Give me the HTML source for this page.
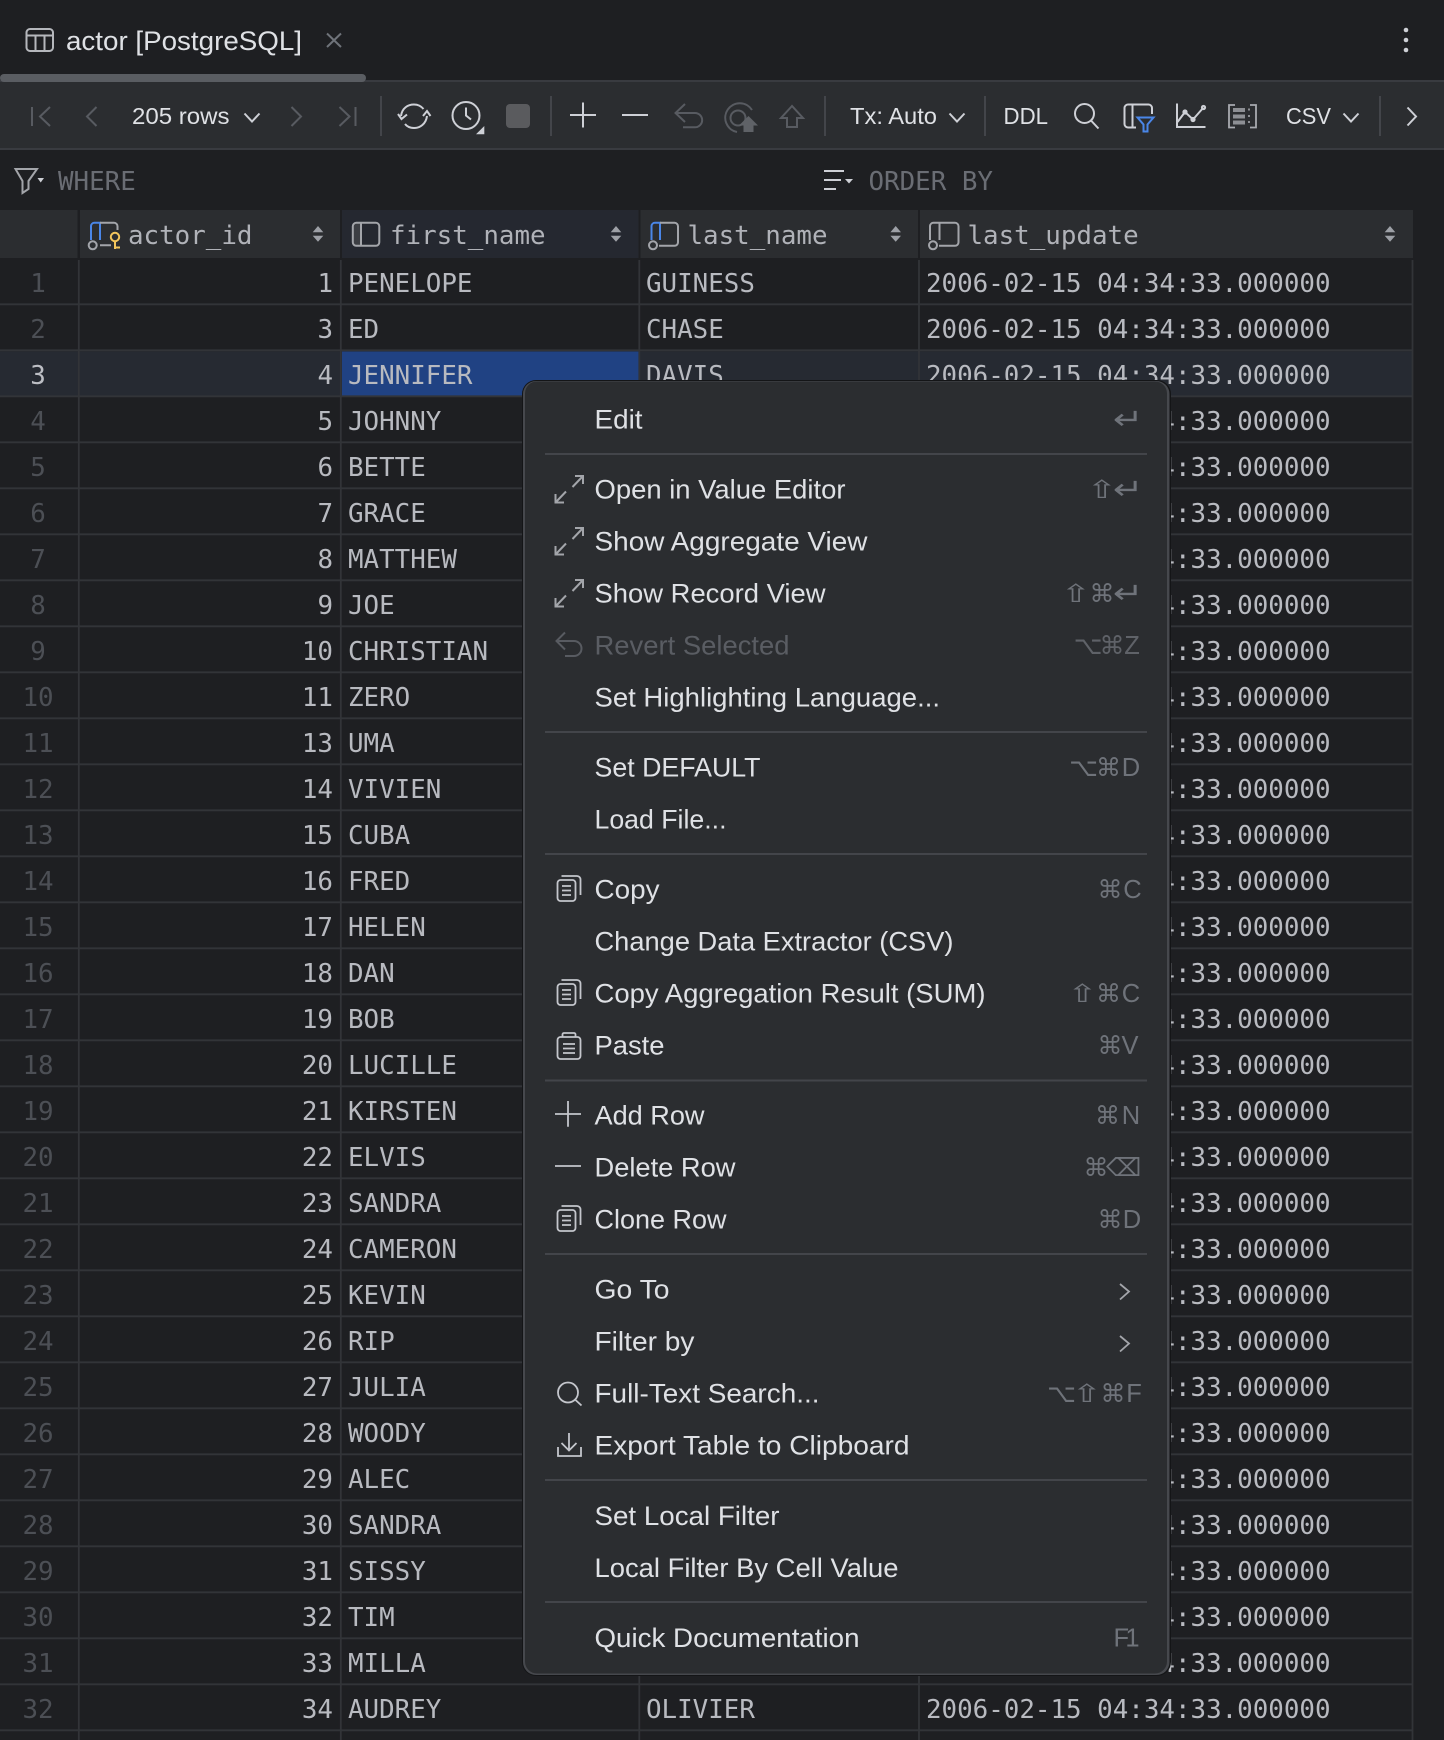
<!DOCTYPE html>
<html lang="en"><head><meta charset="utf-8"><title>actor [PostgreSQL]</title>
<style>
html,body{margin:0;padding:0;background:#1e1f22;width:1444px;height:1740px;overflow:hidden}
svg{display:block}
text{white-space:pre}
.u{font-family:"Liberation Sans",sans-serif;font-size:26.5px;fill:#dfe1e5}
.t{font-family:"Liberation Sans",sans-serif;font-size:23.5px;fill:#dfe1e5}
.d{fill:#5a5d63}
.mono{font-family:"DejaVu Sans Mono","Liberation Mono",monospace;font-size:25.85px}
.c{fill:#b8bac0}
.n{fill:#4c4f55;text-anchor:middle}
.r{fill:#b8bac0;text-anchor:end}
.h{fill:#b0b2b8}
.w{fill:#6a6d74}
.s{font-family:"DejaVu Sans",sans-serif;font-size:25px;fill:#6f737a;text-anchor:middle}
.l{font-family:"Liberation Sans",sans-serif;font-size:25.5px;fill:#6f737a;text-anchor:middle}
.dim .s,.dim .l{fill:#5f6268}
.ic{fill:none;stroke:#ced0d6;stroke-width:2}
.id{fill:none;stroke:#585b61;stroke-width:2}
.im{fill:none;stroke:#a3a5aa;stroke-width:2}
</style></head><body>
<svg xmlns="http://www.w3.org/2000/svg" width="1444" height="1740" viewBox="0 0 1444 1740">
<rect width="1444" height="1740" fill="#1e1f22"/>

<!-- tab bar -->
<rect x="0" y="80" width="1444" height="2" fill="#393b40"/>
<rect x="0" y="74" width="366" height="8" rx="4" fill="#5a5d62"/>
<g fill="none" stroke="#b5b7bc" stroke-width="2"><rect x="26.5" y="29" width="26.5" height="22" rx="3.5"/><path d="M27 35.5H53M35.5 35.5V51M44.5 35.5V51"/></g>
<text x="66" y="50" class="u" textLength="236" lengthAdjust="spacingAndGlyphs">actor [PostgreSQL]</text>
<path d="M327 33.5L341 47M341 33.5L327 47" fill="none" stroke="#6f737a" stroke-width="2"/>
<g fill="#ced0d6"><circle cx="1406" cy="30" r="2.3"/><circle cx="1406" cy="40" r="2.3"/><circle cx="1406" cy="50" r="2.3"/></g>

<!-- toolbar -->
<rect x="0" y="82" width="1444" height="66" fill="#2b2d30"/>
<rect x="0" y="148" width="1444" height="2" fill="#393b40"/>
<g class="id">
<path d="M32 107V126M50 107L40 116.5L50 126"/>
<path d="M96.5 107L87 116.5L96.5 126"/>
<path d="M291.5 107L301 116.5L291.5 126"/>
<path d="M339.5 107L349.5 116.5L339.5 126M355.5 107V126"/>
</g>
<text x="132" y="124" class="t" textLength="97.5" lengthAdjust="spacingAndGlyphs">205 rows</text>
<path d="M244.5 113.5L252 121.5L259.5 113.5" class="ic"/>
<g fill="#43454a"><rect x="380" y="96" width="2" height="40"/><rect x="550" y="96" width="2" height="40"/><rect x="824" y="96" width="2" height="40"/><rect x="984" y="96" width="2" height="40"/><rect x="1379" y="96" width="2" height="40"/></g>
<g class="ic">
<path d="M401 116C402 108 408 104.5 414 104.5C418 104.5 421 106 423.5 109"/>
<path d="M398 114L401.5 119L407 114.5"/>
<path d="M427 116C426 124 420 128 414 128C410 128 407 126.5 405 124"/>
<path d="M423 116L427 111L430.5 116"/>
<circle cx="466" cy="115.5" r="13.5"/>
<path d="M466 107.5V115.5L471 119.5"/>
<path d="M570 115H596M583 102.5V127.5"/>
<path d="M622 115H648"/>
</g>
<path d="M476 134.3H484.3V126Z" fill="#ced0d6"/>
<rect x="506" y="104" width="24" height="24" rx="4" fill="#5a5b5e"/>
<path d="M685 104L675.5 113L685 122M676 113H695A7 7 0 0 1 695 127.3H683" class="id"/>
<g class="id"><path d="M737 132A14.5 14.5 0 1 1 752 110"/><circle cx="738" cy="118" r="7.5"/><path d="M792 106L781 118H787V127H797V118H803Z"/></g>
<path d="M748.5 116L758 125.5H753.5V132H743.5V125.5H739Z" fill="#5f6267"/>
<text x="850" y="124" class="t" textLength="87" lengthAdjust="spacingAndGlyphs">Tx: Auto</text>
<path d="M949.5 113.5L957 121.5L964.5 113.5" class="ic"/>
<text x="1003.5" y="124" class="t" textLength="44.5" lengthAdjust="spacingAndGlyphs">DDL</text>
<g class="ic">
<circle cx="1084.5" cy="113.5" r="9.5"/><path d="M1091 120.5L1098.5 128.5"/>
<path d="M1136 127.5H1128A3.5 3.5 0 0 1 1124.5 124V108A3.5 3.5 0 0 1 1128 104.5H1148.5A3.5 3.5 0 0 1 1152 108V114M1132.5 104.5V127.5"/>
<path d="M1177 103.5V127H1205.5"/>
<path d="M1177.5 122L1185 112L1193 119.5L1203.5 107.5"/>
<circle cx="1185" cy="112" r="1.6"/><circle cx="1193" cy="119.5" r="1.6"/><circle cx="1203.5" cy="107.5" r="1.6"/>
</g>
<path d="M1137.5 117.5H1153.5L1147.5 124.5V131.5H1143.5V124.5Z" fill="none" stroke="#4a86e8" stroke-width="2"/>
<g fill="none" stroke="#a8aab0" stroke-width="1.8"><path d="M1235 105H1229V127.5H1235M1250 105H1256V127.5H1250"/></g>
<g fill="#8d8f94"><rect x="1233" y="108" width="12" height="4"/><rect x="1233" y="114.5" width="12" height="4"/><rect x="1233" y="120.5" width="12" height="4"/><rect x="1248" y="108.5" width="2" height="2"/><rect x="1248" y="115" width="2" height="2"/><rect x="1248" y="121" width="2" height="2"/></g>
<text x="1286" y="124" class="t" textLength="45" lengthAdjust="spacingAndGlyphs">CSV</text>
<path d="M1343.5 113.5L1351 121.5L1358.5 113.5" class="ic"/>
<path d="M1407.5 107.5L1416 116.5L1407.5 125.5" class="ic"/>

<!-- filter row -->
<path d="M15.5 169H37L28.5 181V189L22.5 193V181Z" class="im"/>
<path d="M37.5 178H44L40.7 182.5Z" fill="#ced0d6"/>
<text x="58" y="190" class="mono w">WHERE</text>
<path d="M824 171H844M824 180H841M824 189H836" class="ic"/>
<path d="M845 179H853L849 183.5Z" fill="#ced0d6"/>
<text x="868.5" y="190" class="mono w">ORDER BY</text>

<!-- header -->
<rect x="0" y="210" width="77.5" height="48" fill="#2b2d30"/>
<rect x="80" y="210" width="260" height="48" fill="#2b2d30"/>
<rect x="342" y="210" width="296.5" height="48" fill="#252830"/>
<rect x="640.5" y="210" width="277.5" height="48" fill="#2b2d30"/>
<rect x="920" y="210" width="493" height="48" fill="#2b2d30"/>

<!-- row 3 highlight -->
<rect x="0" y="351.5" width="1413" height="44" fill="#262a32"/>
<rect x="342" y="351.5" width="297" height="44" fill="#204283"/>

<!-- grid -->
<path stroke="#323438" stroke-width="1.8" fill="none" d="M0 304.3H1413M0 350.3H1413M0 396.3H1413M0 442.3H1413M0 488.3H1413M0 534.3H1413M0 580.3H1413M0 626.3H1413M0 672.3H1413M0 718.3H1413M0 764.3H1413M0 810.3H1413M0 856.3H1413M0 902.3H1413M0 948.3H1413M0 994.3H1413M0 1040.3H1413M0 1086.3H1413M0 1132.3H1413M0 1178.3H1413M0 1224.3H1413M0 1270.3H1413M0 1316.3H1413M0 1362.3H1413M0 1408.3H1413M0 1454.3H1413M0 1500.3H1413M0 1546.3H1413M0 1592.3H1413M0 1638.3H1413M0 1684.3H1413M0 1730.3H1413M78.8 260V1740M340.8 260V1740M639.3 260V1740M919 260V1740M1412.5 260V1740"/>

<!-- header icons -->
<path d="M91 240V226A3.5 3.5 0 0 1 94.5 222.8H100V240" fill="none" stroke="#4a86e8" stroke-width="2"/>
<path d="M100 222.8H114A3.5 3.5 0 0 1 117.5 226.3V230M100 245.3H111" class="im"/>
<circle cx="92.7" cy="245.3" r="4" class="im"/>
<g fill="none" stroke="#f2c55c" stroke-width="2"><circle cx="115" cy="237" r="4.2"/><path d="M115 241.5V249M115 247.5H120"/></g>
<text x="128" y="244" class="mono h">actor_id</text>
<path d="M318 226L323.3 232.3H312.7ZM318 241.7L323.3 235.7H312.7Z" fill="#9da0a6"/>

<rect x="353" y="223" width="8" height="22.5" fill="#3c3e43"/>
<rect x="352.8" y="222.8" width="26.5" height="23" rx="3.5" class="im"/><path d="M361 222.8V245.8" class="im"/>
<text x="390" y="244" class="mono h">first_name</text>
<path d="M616 226L621.3 232.3H610.7ZM616 241.7L621.3 235.7H610.7Z" fill="#9da0a6"/>

<path d="M651.5 240V226A3.5 3.5 0 0 1 655 222.8H660V240" fill="none" stroke="#4a86e8" stroke-width="2"/>
<path d="M660 222.8H674.5A3.5 3.5 0 0 1 678 226.3V242.3A3.5 3.5 0 0 1 674.5 245.8H659" class="im"/>
<circle cx="653" cy="245.3" r="4" class="im"/>
<text x="687.5" y="244" class="mono h">last_name</text>
<path d="M895.7 226L901 232.3H890.4ZM895.7 241.7L901 235.7H890.4Z" fill="#9da0a6"/>

<path d="M930 240V226A3.5 3.5 0 0 1 933.5 222.8H955A3.5 3.5 0 0 1 958.5 226.3V242.3A3.5 3.5 0 0 1 955 245.8H939M939.5 222.8V240" class="im"/>
<circle cx="933" cy="245.3" r="4" class="im"/>
<text x="967.5" y="244" class="mono h">last_update</text>
<path d="M1390 226L1395.3 232.3H1384.7ZM1390 241.7L1395.3 235.7H1384.7Z" fill="#9da0a6"/>

<!-- rows -->
<g class="mono">
<text x="38" y="291.8" class="n">1</text><text x="333" y="291.8" class="r">1</text><text x="348" y="291.8" class="c">PENELOPE</text><text x="646" y="291.8" class="c">GUINESS</text><text x="926" y="291.8" class="c">2006-02-15 04:34:33.000000</text>
<text x="38" y="337.8" class="n">2</text><text x="333" y="337.8" class="r">3</text><text x="348" y="337.8" class="c">ED</text><text x="646" y="337.8" class="c">CHASE</text><text x="926" y="337.8" class="c">2006-02-15 04:34:33.000000</text>
<text x="38" y="383.8" class="n" style="fill:#bcbec4">3</text><text x="333" y="383.8" class="r">4</text><text x="348" y="383.8" class="c">JENNIFER</text><text x="646" y="383.8" class="c">DAVIS</text><text x="926" y="383.8" class="c">2006-02-15 04:34:33.000000</text>
<text x="38" y="429.8" class="n">4</text><text x="333" y="429.8" class="r">5</text><text x="348" y="429.8" class="c">JOHNNY</text><text x="926" y="429.8" class="c">2006-02-15 04:34:33.000000</text>
<text x="38" y="475.8" class="n">5</text><text x="333" y="475.8" class="r">6</text><text x="348" y="475.8" class="c">BETTE</text><text x="926" y="475.8" class="c">2006-02-15 04:34:33.000000</text>
<text x="38" y="521.8" class="n">6</text><text x="333" y="521.8" class="r">7</text><text x="348" y="521.8" class="c">GRACE</text><text x="926" y="521.8" class="c">2006-02-15 04:34:33.000000</text>
<text x="38" y="567.8" class="n">7</text><text x="333" y="567.8" class="r">8</text><text x="348" y="567.8" class="c">MATTHEW</text><text x="926" y="567.8" class="c">2006-02-15 04:34:33.000000</text>
<text x="38" y="613.8" class="n">8</text><text x="333" y="613.8" class="r">9</text><text x="348" y="613.8" class="c">JOE</text><text x="926" y="613.8" class="c">2006-02-15 04:34:33.000000</text>
<text x="38" y="659.8" class="n">9</text><text x="333" y="659.8" class="r">10</text><text x="348" y="659.8" class="c">CHRISTIAN</text><text x="926" y="659.8" class="c">2006-02-15 04:34:33.000000</text>
<text x="38" y="705.8" class="n">10</text><text x="333" y="705.8" class="r">11</text><text x="348" y="705.8" class="c">ZERO</text><text x="926" y="705.8" class="c">2006-02-15 04:34:33.000000</text>
<text x="38" y="751.8" class="n">11</text><text x="333" y="751.8" class="r">13</text><text x="348" y="751.8" class="c">UMA</text><text x="926" y="751.8" class="c">2006-02-15 04:34:33.000000</text>
<text x="38" y="797.8" class="n">12</text><text x="333" y="797.8" class="r">14</text><text x="348" y="797.8" class="c">VIVIEN</text><text x="926" y="797.8" class="c">2006-02-15 04:34:33.000000</text>
<text x="38" y="843.8" class="n">13</text><text x="333" y="843.8" class="r">15</text><text x="348" y="843.8" class="c">CUBA</text><text x="926" y="843.8" class="c">2006-02-15 04:34:33.000000</text>
<text x="38" y="889.8" class="n">14</text><text x="333" y="889.8" class="r">16</text><text x="348" y="889.8" class="c">FRED</text><text x="926" y="889.8" class="c">2006-02-15 04:34:33.000000</text>
<text x="38" y="935.8" class="n">15</text><text x="333" y="935.8" class="r">17</text><text x="348" y="935.8" class="c">HELEN</text><text x="926" y="935.8" class="c">2006-02-15 04:34:33.000000</text>
<text x="38" y="981.8" class="n">16</text><text x="333" y="981.8" class="r">18</text><text x="348" y="981.8" class="c">DAN</text><text x="926" y="981.8" class="c">2006-02-15 04:34:33.000000</text>
<text x="38" y="1027.8" class="n">17</text><text x="333" y="1027.8" class="r">19</text><text x="348" y="1027.8" class="c">BOB</text><text x="926" y="1027.8" class="c">2006-02-15 04:34:33.000000</text>
<text x="38" y="1073.8" class="n">18</text><text x="333" y="1073.8" class="r">20</text><text x="348" y="1073.8" class="c">LUCILLE</text><text x="926" y="1073.8" class="c">2006-02-15 04:34:33.000000</text>
<text x="38" y="1119.8" class="n">19</text><text x="333" y="1119.8" class="r">21</text><text x="348" y="1119.8" class="c">KIRSTEN</text><text x="926" y="1119.8" class="c">2006-02-15 04:34:33.000000</text>
<text x="38" y="1165.8" class="n">20</text><text x="333" y="1165.8" class="r">22</text><text x="348" y="1165.8" class="c">ELVIS</text><text x="926" y="1165.8" class="c">2006-02-15 04:34:33.000000</text>
<text x="38" y="1211.8" class="n">21</text><text x="333" y="1211.8" class="r">23</text><text x="348" y="1211.8" class="c">SANDRA</text><text x="926" y="1211.8" class="c">2006-02-15 04:34:33.000000</text>
<text x="38" y="1257.8" class="n">22</text><text x="333" y="1257.8" class="r">24</text><text x="348" y="1257.8" class="c">CAMERON</text><text x="926" y="1257.8" class="c">2006-02-15 04:34:33.000000</text>
<text x="38" y="1303.8" class="n">23</text><text x="333" y="1303.8" class="r">25</text><text x="348" y="1303.8" class="c">KEVIN</text><text x="926" y="1303.8" class="c">2006-02-15 04:34:33.000000</text>
<text x="38" y="1349.8" class="n">24</text><text x="333" y="1349.8" class="r">26</text><text x="348" y="1349.8" class="c">RIP</text><text x="926" y="1349.8" class="c">2006-02-15 04:34:33.000000</text>
<text x="38" y="1395.8" class="n">25</text><text x="333" y="1395.8" class="r">27</text><text x="348" y="1395.8" class="c">JULIA</text><text x="926" y="1395.8" class="c">2006-02-15 04:34:33.000000</text>
<text x="38" y="1441.8" class="n">26</text><text x="333" y="1441.8" class="r">28</text><text x="348" y="1441.8" class="c">WOODY</text><text x="926" y="1441.8" class="c">2006-02-15 04:34:33.000000</text>
<text x="38" y="1487.8" class="n">27</text><text x="333" y="1487.8" class="r">29</text><text x="348" y="1487.8" class="c">ALEC</text><text x="926" y="1487.8" class="c">2006-02-15 04:34:33.000000</text>
<text x="38" y="1533.8" class="n">28</text><text x="333" y="1533.8" class="r">30</text><text x="348" y="1533.8" class="c">SANDRA</text><text x="926" y="1533.8" class="c">2006-02-15 04:34:33.000000</text>
<text x="38" y="1579.8" class="n">29</text><text x="333" y="1579.8" class="r">31</text><text x="348" y="1579.8" class="c">SISSY</text><text x="926" y="1579.8" class="c">2006-02-15 04:34:33.000000</text>
<text x="38" y="1625.8" class="n">30</text><text x="333" y="1625.8" class="r">32</text><text x="348" y="1625.8" class="c">TIM</text><text x="926" y="1625.8" class="c">2006-02-15 04:34:33.000000</text>
<text x="38" y="1671.8" class="n">31</text><text x="333" y="1671.8" class="r">33</text><text x="348" y="1671.8" class="c">MILLA</text><text x="926" y="1671.8" class="c">2006-02-15 04:34:33.000000</text>
<text x="38" y="1717.8" class="n">32</text><text x="333" y="1717.8" class="r">34</text><text x="348" y="1717.8" class="c">AUDREY</text><text x="646" y="1717.8" class="c">OLIVIER</text><text x="926" y="1717.8" class="c">2006-02-15 04:34:33.000000</text>
</g>

<!-- popup menu -->
<rect x="522" y="380" width="649" height="1296" rx="14" fill="#141517"/>
<rect x="523" y="381" width="646.5" height="1294" rx="13" fill="#46484d"/>
<rect x="525" y="381.5" width="642" height="1292" rx="12" fill="#2b2d30"/>
<g fill="#43454a"><rect x="545" y="453" width="602" height="2"/><rect x="545" y="731" width="602" height="2"/><rect x="545" y="853" width="602" height="2"/><rect x="545" y="1079.5" width="602" height="2"/><rect x="545" y="1253" width="602" height="2"/><rect x="545" y="1479" width="602" height="2"/><rect x="545" y="1601" width="602" height="2"/></g>

<g class="u">
<text x="594.5" y="428.5" textLength="48" lengthAdjust="spacingAndGlyphs">Edit</text>
<text x="594.5" y="498.5" textLength="251" lengthAdjust="spacingAndGlyphs">Open in Value Editor</text>
<text x="594.5" y="550.6" textLength="273" lengthAdjust="spacingAndGlyphs">Show Aggregate View</text>
<text x="594.5" y="602.5" textLength="231" lengthAdjust="spacingAndGlyphs">Show Record View</text>
<text x="594.5" y="654.5" textLength="195" lengthAdjust="spacingAndGlyphs" style="fill:#5a5d63">Revert Selected</text>
<text x="594.5" y="706.5" textLength="345.5" lengthAdjust="spacingAndGlyphs">Set Highlighting Language...</text>
<text x="594.5" y="776.7" textLength="166" lengthAdjust="spacingAndGlyphs">Set DEFAULT</text>
<text x="594.5" y="828.7" textLength="132" lengthAdjust="spacingAndGlyphs">Load File...</text>
<text x="594.5" y="898.7" textLength="65" lengthAdjust="spacingAndGlyphs">Copy</text>
<text x="594.5" y="950.7" textLength="359" lengthAdjust="spacingAndGlyphs">Change Data Extractor (CSV)</text>
<text x="594.5" y="1002.7" textLength="391" lengthAdjust="spacingAndGlyphs">Copy Aggregation Result (SUM)</text>
<text x="594.5" y="1054.7" textLength="70" lengthAdjust="spacingAndGlyphs">Paste</text>
<text x="594.5" y="1124.5" textLength="110" lengthAdjust="spacingAndGlyphs">Add Row</text>
<text x="594.5" y="1176.7" textLength="141" lengthAdjust="spacingAndGlyphs">Delete Row</text>
<text x="594.5" y="1228.5" textLength="132" lengthAdjust="spacingAndGlyphs">Clone Row</text>
<text x="594.5" y="1298.5" textLength="75" lengthAdjust="spacingAndGlyphs">Go To</text>
<text x="594.5" y="1350.5" textLength="100" lengthAdjust="spacingAndGlyphs">Filter by</text>
<text x="594.5" y="1402.5" textLength="225" lengthAdjust="spacingAndGlyphs">Full-Text Search...</text>
<text x="594.5" y="1454.5" textLength="315" lengthAdjust="spacingAndGlyphs">Export Table to Clipboard</text>
<text x="594.5" y="1525" textLength="185" lengthAdjust="spacingAndGlyphs">Set Local Filter</text>
<text x="594.5" y="1577" textLength="304" lengthAdjust="spacingAndGlyphs">Local Filter By Cell Value</text>
<text x="594.5" y="1647" textLength="265" lengthAdjust="spacingAndGlyphs">Quick Documentation</text>
</g>

<!-- menu icons -->
<g class="im">
<path d="M575 476H583V484M583 476L572.5 487M555.5 494V502.5H564M555.5 502.5L566 491.5"/>
<path d="M575 528H583V536M583 528L572.5 539M555.5 546V554.5H564M555.5 554.5L566 543.5"/>
<path d="M575 580H583V588M583 580L572.5 591M555.5 598V606.5H564M555.5 606.5L566 595.5"/>
</g>
<path d="M565 632.5L556.5 641L565 649.5M557 641H574A7.5 7.5 0 0 1 574 656H565" class="id"/>
<g fill="none" stroke="#c4c6cc" stroke-width="1.8">
<rect x="557.5" y="880" width="18" height="21" rx="3"/><path d="M562 886H571M562 890.5H571M562 895H571M561.5 876H577A3.5 3.5 0 0 1 580.5 879.5V895"/>
<rect x="557.5" y="984" width="18" height="21" rx="3"/><path d="M562 990H571M562 994.5H571M562 999H571M561.5 980H577A3.5 3.5 0 0 1 580.5 983.5V999"/>
<rect x="557.5" y="1037" width="23" height="22" rx="3"/><path d="M562.5 1037V1034.5A1.5 1.5 0 0 1 564 1033H574A1.5 1.5 0 0 1 575.5 1034.5V1037M563 1044H575M563 1048.5H575M563 1053H575"/>
<rect x="557.5" y="1210" width="18" height="21" rx="3"/><path d="M562 1216H571M562 1220.5H571M562 1225H571M561.5 1206H577A3.5 3.5 0 0 1 580.5 1209.5V1225"/>
<path d="M555 1114H581M568 1101V1126.7"/>
<path d="M555 1166H581"/>
<circle cx="568" cy="1392.5" r="10"/><path d="M575 1399.5L581.5 1405.5"/>
<path d="M569 1433V1450M561.5 1443L569 1450.5L576.5 1443M558 1447V1456H581V1447"/>
</g>
<g fill="none" stroke="#a3a5aa" stroke-width="1.8"><path d="M1120 1284L1129 1291.5L1120 1299.5M1120 1336L1129 1343.5L1120 1351.5"/></g>

<!-- shortcuts -->
<g>
<text transform="translate(1128 429) scale(1.45 1.15)" class="s">↵</text>
<text transform="translate(1102 498) scale(1.45 1)" class="s">⇧</text><text transform="translate(1128 499) scale(1.45 1.15)" class="s">↵</text>
<text transform="translate(1076 602) scale(1.45 1)" class="s">⇧</text><text x="1102" y="602" class="s">⌘</text><text transform="translate(1128 603) scale(1.45 1.15)" class="s">↵</text>
<g class="dim"><text x="1088" y="654" class="s">⌥</text><text x="1112" y="654" class="s">⌘</text><text x="1132" y="654" class="l">Z</text></g>
<text x="1083.5" y="776" class="s">⌥</text><text x="1108.5" y="776" class="s">⌘</text><text x="1131" y="776" class="l">D</text>
<text x="1110" y="898" class="s">⌘</text><text x="1132.5" y="898" class="l">C</text>
<text transform="translate(1082.5 1002) scale(1.45 1)" class="s">⇧</text><text x="1108.5" y="1002" class="s">⌘</text><text x="1131" y="1002" class="l">C</text>
<text x="1110" y="1054" class="s">⌘</text><text x="1130" y="1054" class="l">V</text>
<text x="1107.5" y="1124" class="s">⌘</text><text x="1131" y="1124" class="l">N</text>
<text x="1096" y="1176" class="s">⌘</text><text x="1123.5" y="1176" class="s">⌫</text>
<text x="1110" y="1228" class="s">⌘</text><text x="1132" y="1228" class="l">D</text>
<text x="1061.5" y="1402" class="s">⌥</text><text transform="translate(1087 1402) scale(1.45 1)" class="s">⇧</text><text x="1113" y="1402" class="s">⌘</text><text x="1134" y="1402" class="l">F</text>
<text x="1126.5" y="1646.7" class="l" style="text-anchor:middle" textLength="26">F1</text>
</g>
</svg>
</body></html>
